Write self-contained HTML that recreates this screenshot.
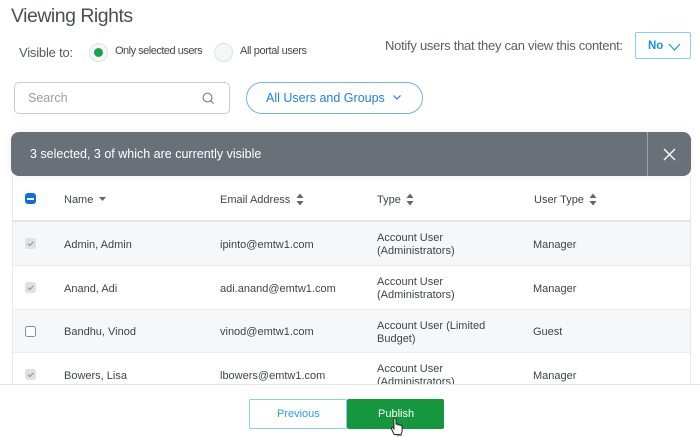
<!DOCTYPE html>
<html>
<head>
<meta charset="utf-8">
<style>
html,body{margin:0;padding:0;background:#fff}
body{width:700px;height:437px;position:relative;overflow:hidden;font-family:"Liberation Sans",sans-serif;color:#3d4146}
.a{position:absolute;white-space:nowrap}
.t{font-size:11px;line-height:13px;color:#3f4348}
.row{position:absolute;left:13px;width:677px;box-sizing:border-box;border-bottom:1px solid #ebedf0}
.cb{position:absolute;left:25px;width:11px;height:11px;border-radius:2.5px;background:#dfe1e5}
.cb svg{position:absolute;left:0;top:0}
.srt{position:absolute;width:8px;height:15px}
</style>
</head>
<body>
<div class="a" style="left:11px;top:4px;font-size:19.5px;line-height:24px;color:#4a4f55;letter-spacing:-.5px">Viewing Rights</div>
<div class="a" style="left:19px;top:45px;font-size:13px;line-height:15px;color:#555a60;letter-spacing:-.2px">Visible to:</div>

<div class="a" style="left:89px;top:43px;width:19px;height:19px;box-sizing:border-box;border:1px solid #dfe1e5;border-radius:50%;background:#f5f6f8"></div>
<div class="a" style="left:94px;top:48px;width:9px;height:9px;border-radius:50%;background:#17a34a"></div>
<div class="a" style="left:115px;top:44px;font-size:11px;line-height:14px;color:#44484d;letter-spacing:-.5px">Only selected users</div>
<div class="a" style="left:214px;top:43px;width:19px;height:19px;box-sizing:border-box;border:1px solid #dfe1e5;border-radius:50%;background:#f5f6f8"></div>
<div class="a" style="left:240px;top:44px;font-size:11px;line-height:14px;color:#44484d;letter-spacing:-.38px">All portal users</div>

<div class="a" style="left:385px;top:38px;font-size:13px;line-height:16px;color:#5a5f65;letter-spacing:-.27px">Notify users that they can view this content:</div>
<div class="a" style="left:635px;top:32px;width:56px;height:27px;box-sizing:border-box;border:1px solid #85d0f5;border-radius:2px;background:#fff"></div>
<div class="a" style="left:648px;top:39px;font-size:11.5px;line-height:14px;font-weight:bold;color:#1a8fe3">No</div>
<svg class="a" style="left:667px;top:42px" width="16" height="10" viewBox="0 0 16 10"><path d="M2 2 L7.5 8 L13 2" fill="none" stroke="#1a8fe3" stroke-width="1.1"/></svg>

<div class="a" style="left:14px;top:82px;width:216px;height:32px;box-sizing:border-box;border:1px solid #c9cbcf;border-radius:5px;background:#fff"></div>
<div class="a" style="left:28px;top:91px;font-size:12.5px;line-height:15px;color:#9a9ea3">Search</div>
<svg class="a" style="left:201px;top:91px" width="14" height="14" viewBox="0 0 14 14"><circle cx="6.5" cy="6.5" r="4.4" fill="none" stroke="#6a6e73" stroke-width="1"/><path d="M9.7 9.7 L12.6 12.6" stroke="#6a6e73" stroke-width="1"/></svg>

<div class="a" style="left:246px;top:82px;width:177px;height:32px;box-sizing:border-box;border:1px solid #6fb0f2;border-radius:16px;background:#fff"></div>
<div class="a" style="left:266px;top:91px;font-size:12.5px;line-height:15px;color:#1f7fe8">All Users and Groups</div>
<svg class="a" style="left:392px;top:94px" width="10" height="8" viewBox="0 0 10 8"><path d="M1.5 1.5 L5 5 L8.5 1.5" fill="none" stroke="#1f7fe8" stroke-width="1.2"/></svg>

<!-- table -->
<div class="a" style="left:12px;top:176px;width:679px;height:209px;box-sizing:border-box;border-left:1px solid #e6e8eb;border-right:1px solid #e6e8eb;background:#fff"></div>
<div class="row" style="top:177px;height:45px;background:#fff;border-bottom:2px solid #e3e5e8"></div>
<div class="row" style="top:222px;height:44px;background:#f6f7f9"></div>
<div class="row" style="top:266px;height:44px;background:#fff"></div>
<div class="row" style="top:310px;height:43px;background:#f6f7f9"></div>
<div class="row" style="top:353px;height:32px;background:#fff;border-bottom:0"></div>

<!-- banner -->
<div class="a" style="left:11px;top:132px;width:680px;height:44px;background:#6a7078;border-radius:8px;box-shadow:0 0 10px rgba(0,0,0,.06)"></div>
<div class="a" style="left:647px;top:132px;width:1px;height:44px;background:#9ea3a9"></div>
<div class="a" style="left:30px;top:147px;font-size:12.5px;line-height:15px;color:#fff">3 selected, 3 of which are currently visible</div>
<svg class="a" style="left:663px;top:148px" width="13" height="13" viewBox="0 0 13 13"><path d="M1 1 L12 12 M12 1 L1 12" stroke="#fff" stroke-width="1.4"/></svg>

<!-- header -->
<div class="a" style="left:25px;top:193px;width:11px;height:11px;border-radius:3px;background:#0b6fe0"></div>
<div class="a" style="left:27px;top:198px;width:7px;height:2px;background:#fff"></div>
<div class="a t" style="left:64px;top:194px">Name</div>
<svg class="a" style="left:98px;top:196px" width="9" height="6" viewBox="0 0 9 6"><path d="M1 1 H8 L4.5 5 Z" fill="#62666c"/></svg>
<div class="a t" style="left:220px;top:194px">Email Address</div>
<svg class="srt" style="left:296px;top:192px" viewBox="0 0 8 15"><path d="M4 1.5 L7.5 6 H.5 Z M.5 9 H7.5 L4 13.5 Z" fill="#62666c"/></svg>
<div class="a t" style="left:377px;top:194px">Type</div>
<svg class="srt" style="left:406px;top:192px" viewBox="0 0 8 15"><path d="M4 1.5 L7.5 6 H.5 Z M.5 9 H7.5 L4 13.5 Z" fill="#62666c"/></svg>
<div class="a t" style="left:534px;top:194px">User Type</div>
<svg class="srt" style="left:589px;top:192px" viewBox="0 0 8 15"><path d="M4 1.5 L7.5 6 H.5 Z M.5 9 H7.5 L4 13.5 Z" fill="#62666c"/></svg>

<!-- row 1 -->
<div class="cb" style="top:238px"><svg width="11" height="11" viewBox="0 0 11 11"><path d="M2.8 5.6 L4.8 7.6 L8.4 3.8" fill="none" stroke="#9a9ea4" stroke-width="1.3"/></svg></div>
<div class="a t" style="left:64px;top:239px">Admin, Admin</div>
<div class="a t" style="left:220px;top:239px">ipinto@emtw1.com</div>
<div class="a t" style="left:377px;top:232px">Account User<br>(Administrators)</div>
<div class="a t" style="left:533px;top:239px">Manager</div>

<!-- row 2 -->
<div class="cb" style="top:282px"><svg width="11" height="11" viewBox="0 0 11 11"><path d="M2.8 5.6 L4.8 7.6 L8.4 3.8" fill="none" stroke="#9a9ea4" stroke-width="1.3"/></svg></div>
<div class="a t" style="left:64px;top:283px">Anand, Adi</div>
<div class="a t" style="left:220px;top:283px">adi.anand@emtw1.com</div>
<div class="a t" style="left:377px;top:276px">Account User<br>(Administrators)</div>
<div class="a t" style="left:533px;top:283px">Manager</div>

<!-- row 3 -->
<div class="a" style="left:25px;top:326px;width:11px;height:11px;box-sizing:border-box;border:1px solid #8a8e94;border-radius:2.5px;background:#fff"></div>
<div class="a t" style="left:64px;top:326px">Bandhu, Vinod</div>
<div class="a t" style="left:220px;top:326px">vinod@emtw1.com</div>
<div class="a t" style="left:377px;top:320px">Account User (Limited<br>Budget)</div>
<div class="a t" style="left:533px;top:326px">Guest</div>

<!-- row 4 -->
<div class="cb" style="top:369px"><svg width="11" height="11" viewBox="0 0 11 11"><path d="M2.8 5.6 L4.8 7.6 L8.4 3.8" fill="none" stroke="#9a9ea4" stroke-width="1.3"/></svg></div>
<div class="a t" style="left:64px;top:370px">Bowers, Lisa</div>
<div class="a t" style="left:220px;top:370px">lbowers@emtw1.com</div>
<div class="a t" style="left:377px;top:363px">Account User<br>(Administrators)</div>
<div class="a t" style="left:533px;top:370px">Manager</div>

<!-- footer -->
<div class="a" style="left:0;top:384px;width:700px;height:53px;background:#fff;border-top:1px solid #e4e6e9;box-sizing:border-box"></div>
<div class="a" style="left:249px;top:399px;width:98px;height:30px;box-sizing:border-box;border:1px solid #85d0f5;border-radius:2px;background:#fff"></div>
<div class="a" style="left:277px;top:407px;font-size:11px;line-height:14px;color:#2b9bf0">Previous</div>
<div class="a" style="left:347px;top:399px;width:97px;height:30px;border-radius:2px;background:#15973d"></div>
<div class="a" style="left:378px;top:407px;font-size:11px;line-height:14px;color:#fff">Publish</div>
<svg class="a" style="left:390px;top:416px" width="16" height="21" viewBox="0 0 16 21"><path d="M4.2 18.5 L1.5 13 C1 11.8 2.4 11 3.2 12 L4 13 L3.8 3 C3.8 1.6 5.8 1.6 5.9 3 L6.1 8.5 C6.5 7.6 8 7.8 8.1 8.8 C8.6 8 10 8.3 10.1 9.3 C10.7 8.8 12 9.2 12 10.3 L12.2 14 C12.2 15.5 11.6 17 11 18.5 Z" fill="#fff" stroke="#222" stroke-width="1"/><path d="M6.5 19.5 H12" stroke="#999" stroke-width="1.4"/></svg>
</body>
</html>
